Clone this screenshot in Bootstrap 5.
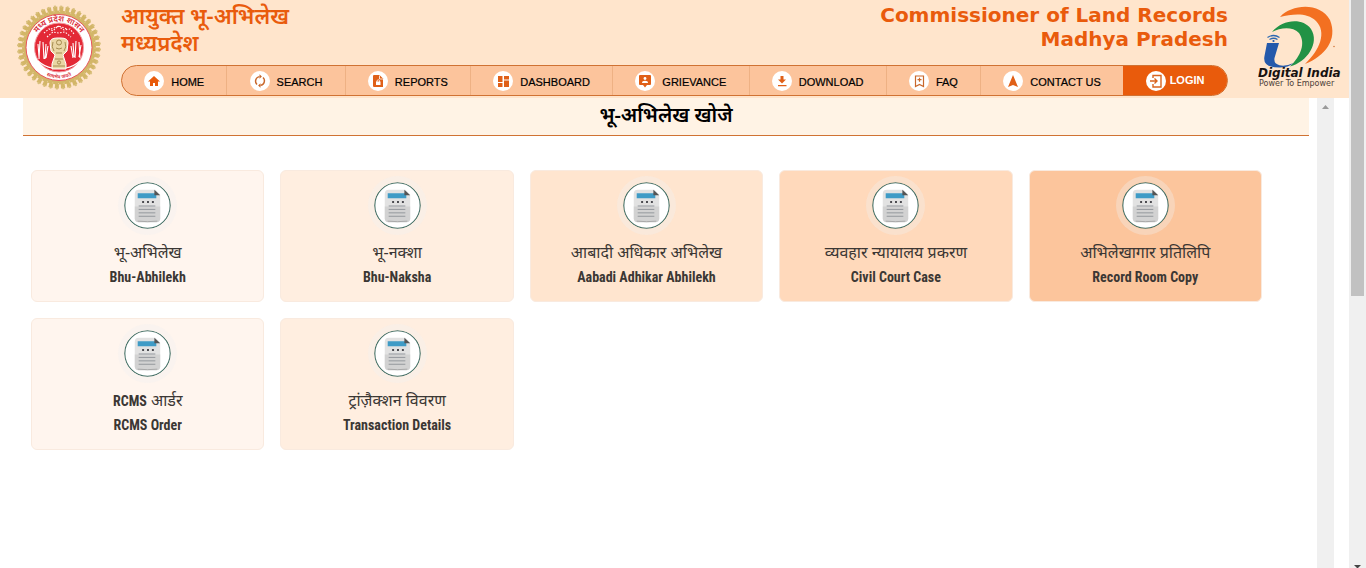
<!DOCTYPE html>
<html lang="hi">
<head>
<meta charset="utf-8">
<meta name="viewport" content="width=device-width, initial-scale=1">
<title>Commissioner of Land Records, Madhya Pradesh</title>
<link href="https://cdn.jsdelivr.net/npm/bootstrap@5.3.0/dist/css/bootstrap.min.css" rel="stylesheet">
<style>
:root{--brand:#e95b0c;--line:#d07233}
body{font-family:"Noto Sans","Liberation Sans",sans-serif;background:#fff}
.page-main{min-width:0}
.site-head{background:#ffe5cc;height:98px;padding:0 7px 0 15px}
.emblem{width:88px;margin-right:18px}
.digital{width:84px;margin-left:30px}
.title-hi{font-size:22px;line-height:27px;font-weight:600;color:var(--brand);padding-top:2px}
.title-en{font-family:"DejaVu Sans",sans-serif;font-size:20px;line-height:24px;font-weight:700;color:var(--brand);padding-top:3px}
.titles{height:65px}
.menu{height:31px;border:1px solid var(--line);border-radius:16px;background:#fcc49c;overflow:hidden;font-family:"Liberation Sans",sans-serif;font-size:11px}
.menu .nav-link{color:#000;padding:0;gap:7px;height:29px;-webkit-text-stroke:.2px #000}
.menu li+li{border-left:1px solid #eeb184}
.menu .nav-link span{padding-top:3px}
.menu svg{width:20px;height:20px;flex:none}
.menu .login{flex-grow:0!important;width:104px;border:0;background:var(--brand)}
.menu .login .nav-link{color:#fff;font-weight:700;gap:4px;-webkit-text-stroke:0}
.menu .login span{padding:0}
.panel-area{margin:0 15px 0 23px;height:470px}
.heading-bar{background:#fff3e5;border-bottom:1px solid var(--line);height:38px;margin-right:8px;font-size:20px;line-height:34px;font-weight:600;color:#000}
.tiles{padding:34px 55px 0 8px}
.tile{display:block;height:132px;padding-top:11px;border:1px solid #f9eadf;border-radius:6px;color:#3b3734;text-decoration:none;text-align:center}
.tone1{background:#fff5ee}.tone2{background:#ffeee0}.tone3{background:#ffe5cf}.tone4{background:#ffd9bb}.tone5{background:#fcc59c}
.tile svg{width:47px;height:47px;display:block;margin:0 auto 10px;border-radius:50%;box-shadow:0 0 0 6px rgba(240,240,240,.35)}
.tile .hi{display:block;font-size:16px;line-height:26px}
.tile .en{display:block;font-family:"Roboto Condensed",Roboto,sans-serif;font-weight:700;font-size:14px;line-height:24px}
.inner-bar{width:17px;background:#f0f0f0;padding-top:5px}
.outer-bar{width:17px;background:#f0f0f0;height:568px}
.outer-bar .thumb{height:296px;width:13px;background:#c1c1c1}
</style>
</head>
<body>
<svg class="d-none" xmlns="http://www.w3.org/2000/svg">
<symbol id="doc" viewBox="0 0 48 48">
<circle cx="24" cy="24" r="23.2" fill="#fff" stroke="#48736a" stroke-width="1.2"/>
<path d="M15 8h17l5 5v24q0 4-4 4H15q-4 0-4-4V12q0-4 4-4z" fill="#e2e2e2"/>
<path d="M11 25h26v12q0 4-4 4H15q-4 0-4-4z" fill="#c9c9c9" opacity=".65"/>
<path d="M14 11.500h19v5H14z" fill="#3f9bc6"/>
<path d="M31 8l6 5.500h-6z" fill="#555"/>
<path d="M18.500 19.500h2v2h-2zm5 0h2v2h-2zm5 0h2v2h-2z" fill="#4b4b50"/>
<path d="M15 24.500h17M15 28h17M15 31.500h17M15 35h17" stroke="#92979c"/>
<path d="M14 40q10 1 20 0" stroke="#a8a8a8" fill="none"/>
</symbol>
</svg>
<div class="d-flex">
<div class="page-main flex-grow-1">
<header class="site-head d-flex">
<svg class="emblem flex-shrink-0" viewBox="0 0 88 98" role="img" aria-label="मध्यप्रदेश शासन">
<defs><path id="arcTop" d="M20 57.500A26 26 0 1 1 68 57.500"/><path id="arcBot" d="M20 67A31 31 0 0 0 68 67"/></defs>
<circle cx="44" cy="47.500" r="37" fill="#d3b668"/>
<circle cx="44" cy="47.500" r="38.500" fill="none" stroke="#d3b668" stroke-width="5" stroke-dasharray="4 2.050"/>
<circle cx="44" cy="47.500" r="41" fill="none" stroke="#d8bf7c" stroke-width="2" stroke-dasharray="2 4.440" stroke-dashoffset="-1"/>
<circle cx="44" cy="47.500" r="36" fill="none" stroke="#ecd9a4" stroke-dasharray="1 4.650"/>
<circle cx="44" cy="47.500" r="33" fill="#fff" stroke="#e8545d"/>
<circle cx="44" cy="47.500" r="24.500" fill="#e32936" stroke="#f4a1a5"/>
<g fill="#d92a35" font-family="Noto Sans, sans-serif" font-weight="600" text-anchor="middle"><text font-size="8"><textPath href="#arcTop" startOffset="50%">मध्य प्रदेश शासन</textPath></text><text font-size="5"><textPath href="#arcBot" startOffset="50%">सत्यमेव जयते</textPath></text></g>
<g fill="none" stroke="#fff" stroke-width="1.100">
<path d="M23 44l1 13M25 41l-1 18M28 42l1 17M31 44l-1 15M33 46l-2 12M58 43l1 14M61 41l-1 17M64 42l1 16M66 45l-2 12M56 46l2 12"/>
<path d="M29 33l5-4 4 2 5-5 6 4 6-1 4 5M32 37l6-5 6 1 6-1 6 5M36 29l8-3 8 3" stroke-dasharray="1.500 1.500"/>
<path d="M23 61q7 6 14 7M65 61q-7 6-14 7"/>
</g>
<path d="M35 43q0-5 7-5h4q7 0 7 5l-1 8-4 4 3 9v5H37v-5l3-9-4-4z" fill="#ead6a5" stroke="#fff"/>
<g fill="none" stroke="#9d8347" stroke-width=".9"><circle cx="44" cy="42.500" r="2.500"/><path d="M38 42q-2 5 1 9M50 42q2 5-1 9M41 48q3 2 6 0M41 53h6M40 59h8M38 66h12"/><circle cx="44" cy="62.500" r="1.600"/></g>
</svg>
<div class="flex-grow-1">
<div class="titles d-flex justify-content-between">
<div class="title-hi">आयुक्त भू-अभिलेख<br>मध्यप्रदेश</div>
<div class="title-en text-end">Commissioner of Land Records<br>Madhya Pradesh</div>
</div>
<nav aria-label="Main">
<ul class="menu nav flex-nowrap mb-0">
<li class="flex-fill"><a href="#" class="nav-link d-flex align-items-center justify-content-center"><svg viewBox="0 0 20 20"><circle cx="10" cy="10" r="10" fill="#fff"/><path d="M10 5l-6 5.500h2V15h3v-3h2v3h3v-4.500h2z" fill="#e95b0c"/></svg><span>HOME</span></a></li>
<li class="flex-fill"><a href="#" class="nav-link d-flex align-items-center justify-content-center"><svg viewBox="0 0 20 20"><circle cx="10" cy="10" r="10" fill="#fff"/><path d="M7 13.500A4.600 4.600 0 0 1 9.500 5.600M13 6.500A4.600 4.600 0 0 1 10.500 14.400" fill="none" stroke="#c9682c" stroke-width="1.400"/><path d="M9.500 3.300v4.400l2.400-2.200zM10.500 12.300v4.400L8.100 14.500z" fill="#c9682c"/></svg><span>SEARCH</span></a></li>
<li class="flex-fill"><a href="#" class="nav-link d-flex align-items-center justify-content-center"><svg viewBox="0 0 20 20"><circle cx="10" cy="10" r="10" fill="#fff"/><path d="M6 4h5.500L15 7.500V16H6q-1 0-1-1V5q0-1 1-1z" fill="#e06018"/><path d="M11.500 4.500V8H15" fill="none" stroke="#fff" stroke-width=".8"/><path d="M8 10.500h4.500V14H8z" fill="#fff"/><path d="M9 11V9.500q1.250-1.500 2.500 0V11" fill="none" stroke="#fff" stroke-width=".8"/></svg><span>REPORTS</span></a></li>
<li class="flex-fill"><a href="#" class="nav-link d-flex align-items-center justify-content-center"><svg viewBox="0 0 20 20"><circle cx="10" cy="10" r="10" fill="#fff"/><path d="M5 5h4.500v6H5zM5 12h4.500v4H5zM11 5h5v3.500h-5zM11 9.500h5V16h-5z" fill="#e06018"/></svg><span>DASHBOARD</span></a></li>
<li class="flex-fill"><a href="#" class="nav-link d-flex align-items-center justify-content-center"><svg viewBox="0 0 20 20"><circle cx="10" cy="10" r="10" fill="#fff"/><path d="M5 4h10q1 0 1 1v8q0 1-1 1h-3l-2 2.500L8 14H5q-1 0-1-1V5q0-1 1-1z" fill="#e06018"/><circle cx="10" cy="7.500" r="1.400" fill="#fff"/><path d="M7 12q0-2.200 3-2.200t3 2.200z" fill="#fff"/></svg><span>GRIEVANCE</span></a></li>
<li class="flex-fill"><a href="#" class="nav-link d-flex align-items-center justify-content-center"><svg viewBox="0 0 20 20"><circle cx="10" cy="10" r="10" fill="#fff"/><path d="M8.500 5h3v3.500H14l-4 4-4-4h2.500zM6 14h8.500v1.300H6z" fill="#e06018"/></svg><span>DOWNLOAD</span></a></li>
<li class="flex-fill"><a href="#" class="nav-link d-flex align-items-center justify-content-center"><svg viewBox="0 0 20 20"><circle cx="10" cy="10" r="10" fill="#fff"/><path d="M6.500 5h8v10.500l-4-2-4 2zM10.500 6.700v4M8.500 8.700h4" fill="none" stroke="#c9682c" stroke-width="1.200"/></svg><span>FAQ</span></a></li>
<li class="flex-fill"><a href="#" class="nav-link d-flex align-items-center justify-content-center"><svg viewBox="0 0 20 20"><circle cx="10" cy="10" r="10" fill="#fff"/><path d="M10 4l5 12-5-2-5 2z" fill="#e06018"/></svg><span>CONTACT US</span></a></li>
<li class="login"><a href="#" class="nav-link d-flex align-items-center justify-content-center"><svg viewBox="0 0 20 20"><circle cx="10" cy="10" r="10" fill="#fff"/><path d="M7 7V4.500h8v11.500H7v-3M4 10h7M8.500 7.500L11 10l-2.500 2.500" fill="none" stroke="#d9641f" stroke-width="1.400"/></svg><span>LOGIN</span></a></li>
</ul>
</nav>
</div>
<svg class="digital flex-shrink-0" viewBox="0 0 84 98" role="img" aria-label="Digital India">
<path d="M22 17C34 4 62 2 72 20C80 40 67 56 47 64C62 50 69 32 58 21C49 12 34 14 22 17z" fill="#f37021"/>
<path d="M14 32C24 20 44 17 53 29C62 43 49 62 32 66.500C43 56 48 43 41 33C34 26 22 28 14 32z" fill="#219245"/>
<path d="M9 43h12L16.500 58q-1 6 5 7.200 6 1.500 14-2.200-5 4.500-14 4.500Q4 67.500 6.500 56z" fill="#2459ab"/>
<path d="M9.500 37.500q6-4 12 0M11.500 39.500q4-2.500 8 0" fill="none" stroke="#2b68b2" stroke-width="1.300"/><circle cx="15.500" cy="41" r="1.100" fill="#2459ab"/>
<circle cx="76" cy="46.500" r=".8" fill="#d17a42"/>
<text font-family="DejaVu Sans, sans-serif"><tspan x="0" y="77" font-size="12" font-weight="700" font-style="italic" fill="#171210">Digital India</tspan><tspan x="1" y="86" font-size="8" fill="#4d4038">Power To Empower</tspan></text>
</svg>
</header>
<main class="panel-area d-flex">
<div class="flex-grow-1">
<h1 class="heading-bar text-center mb-0">भू-अभिलेख खोजे</h1>
<div class="tiles">
<div class="row row-cols-5 gx-3 gy-3">
<div class="col"><a href="#" class="tile tone1"><svg aria-hidden="true"><use href="#doc"/></svg><span class="hi">भू-अभिलेख</span><span class="en">Bhu-Abhilekh</span></a></div>
<div class="col"><a href="#" class="tile tone2"><svg aria-hidden="true"><use href="#doc"/></svg><span class="hi">भू-नक्शा</span><span class="en">Bhu-Naksha</span></a></div>
<div class="col"><a href="#" class="tile tone3"><svg aria-hidden="true"><use href="#doc"/></svg><span class="hi">आबादी अधिकार अभिलेख</span><span class="en">Aabadi Adhikar Abhilekh</span></a></div>
<div class="col"><a href="#" class="tile tone4"><svg aria-hidden="true"><use href="#doc"/></svg><span class="hi">व्यवहार न्यायालय प्रकरण</span><span class="en">Civil Court Case</span></a></div>
<div class="col"><a href="#" class="tile tone5"><svg aria-hidden="true"><use href="#doc"/></svg><span class="hi">अभिलेखागार प्रतिलिपि</span><span class="en">Record Room Copy</span></a></div>
<div class="col"><a href="#" class="tile tone1"><svg aria-hidden="true"><use href="#doc"/></svg><span class="hi"><b class="en d-inline">RCMS</b> आर्डर</span><span class="en">RCMS Order</span></a></div>
<div class="col"><a href="#" class="tile tone2"><svg aria-hidden="true"><use href="#doc"/></svg><span class="hi">ट्रांज़ैक्शन विवरण</span><span class="en">Transaction Details</span></a></div>
</div>
</div>
</div>
<div class="inner-bar flex-shrink-0"><svg class="d-block mx-auto" width="9" height="6" viewBox="0 0 9 6"><path d="M1 6l3.500-4L8 6z" fill="#9a9a9a"/></svg></div>
</main>
</div>
<div class="outer-bar flex-shrink-0 d-flex flex-column align-items-center justify-content-between"><div class="thumb"></div><svg class="d-block" width="9" height="4" viewBox="0 0 9 4"><path d="M1 1h7L5 4H4z" fill="#444"/></svg></div>
</div>
<script src="https://cdn.jsdelivr.net/npm/bootstrap@5.3.0/dist/js/bootstrap.bundle.min.js"></script>
</body>
</html>
